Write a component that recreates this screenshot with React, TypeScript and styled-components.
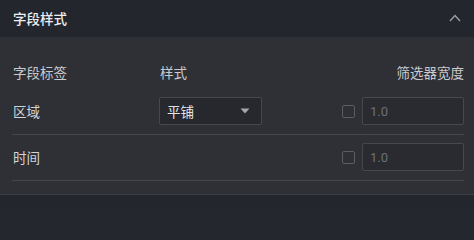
import React from "react";
import styled, { createGlobalStyle } from "styled-components";

const GlobalStyle = createGlobalStyle`
  html, body {
    margin: 0;
    padding: 0;
    background: #25272e;
  }
  body {
    font-family: "Noto Sans CJK SC", "Noto Sans", sans-serif;
    -webkit-font-smoothing: antialiased;
  }
`;

const rows = [
  { label: "区域", select: "平铺", width: "1.0" },
  { label: "时间", select: null, width: "1.0" },
];

const App = () => {
  return (
    <>
      <GlobalStyle />
      <Panel>
        <PanelHeader>
          <PanelTitle>字段样式</PanelTitle>
          <Chevron width="12" height="8" viewBox="0 0 12 8">
            <path d="M1 7 L6 1.6 L11 7" fill="none" stroke="#9c9ea5" strokeWidth="1.4" />
          </Chevron>
        </PanelHeader>
        <PanelBody>
          <ColumnRow>
            <ColumnLabel>字段标签</ColumnLabel>
            <ColumnLabel>样式</ColumnLabel>
            <ColumnLabel $right>筛选器宽度</ColumnLabel>
          </ColumnRow>
          {rows.map((row) => (
            <FieldRow key={row.label}>
              <FieldLabel>{row.label}</FieldLabel>
              <div>
                {row.select && (
                  <Select>
                    <span>{row.select}</span>
                    <Caret width="10" height="6" viewBox="0 0 10 6">
                      <path d="M0.5 0.5 H9.5 L5 5.5 Z" fill="#a4a6ac" />
                    </Caret>
                  </Select>
                )}
              </div>
              <WidthCell>
                <Checkbox />
                <WidthInput>{row.width}</WidthInput>
              </WidthCell>
            </FieldRow>
          ))}
        </PanelBody>
        <PanelFooter />
      </Panel>
    </>
  );
};

const Panel = styled.div`
  width: 474px;
  height: 207px;
  display: flex;
  flex-direction: column;
  overflow: hidden;
`;

const PanelHeader = styled.div`
  height: 37px;
  background: #24262d;
  display: flex;
  align-items: center;
  justify-content: space-between;
  padding: 0 12px 0 13px;
  box-sizing: border-box;
`;

const PanelTitle = styled.span`
  color: #eceef1;
  font-size: 13.5px;
  font-weight: 500;
  line-height: 20px;
  margin-top: -1px;
`;

const Chevron = styled.svg`
  margin-top: -1px;
  margin-right: 1px;
`;

const PanelBody = styled.div`
  background: #2f3036;
  padding: 24px 10px 13px 12px;
  border-bottom: 1px solid #3b3d45;
`;

const ColumnRow = styled.div`
  display: grid;
  grid-template-columns: 147px 1fr 1fr;
  height: 22px;
  align-items: center;
  margin-bottom: 6px;
`;

const ColumnLabel = styled.span<{ $right?: boolean }>`
  color: #c9cacf;
  font-size: 13.5px;
  line-height: 22px;
  padding-left: 1px;
  text-align: ${(p) => (p.$right ? "right" : "left")};
`;

const FieldRow = styled.div`
  display: grid;
  grid-template-columns: 147px 103px 1fr;
  align-items: center;
  padding: 8px 0 9px;
  border-bottom: 1px solid #46474d;
`;

const FieldLabel = styled.span`
  color: #d3d4d8;
  font-size: 13.5px;
  line-height: 28px;
  padding-left: 1px;
`;

const Select = styled.div`
  height: 28px;
  box-sizing: border-box;
  border: 1px solid #46484f;
  border-radius: 2px;
  background: #27282e;
  display: flex;
  align-items: center;
  justify-content: space-between;
  padding: 0 11px 0 7px;
  color: #e2e3e6;
  font-size: 13.5px;
`;

const Caret = styled.svg`
  display: block;
`;

const WidthCell = styled.div`
  display: flex;
  align-items: center;
  justify-content: flex-end;
  gap: 7px;
`;

const Checkbox = styled.span`
  width: 13px;
  height: 13px;
  box-sizing: border-box;
  border: 1px solid #5c5d63;
  border-radius: 2px;
`;

const WidthInput = styled.div`
  width: 102px;
  height: 28px;
  box-sizing: border-box;
  border: 1px solid #46484f;
  border-radius: 2px;
  background: #2a2b31;
  padding: 0 7px;
  display: flex;
  align-items: center;
  color: #6d6f75;
  font-family: "Roboto", "Noto Sans", sans-serif;
  font-size: 13px;
`;

const PanelFooter = styled.div`
  flex: 1;
  background: #24262d;
`;

export default App;
